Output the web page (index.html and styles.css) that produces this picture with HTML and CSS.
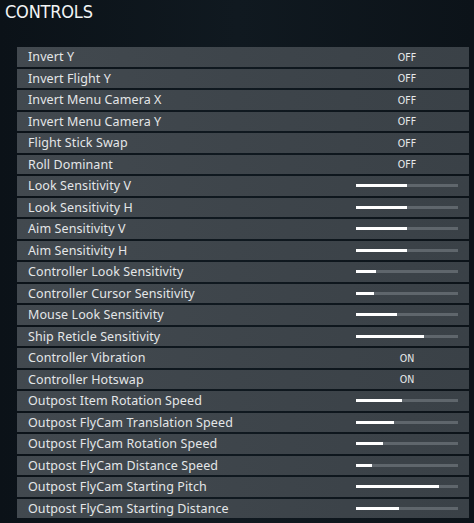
FILE: index.html
```html
<!DOCTYPE html>
<html>
<head>
<meta charset="utf-8">
<link rel="stylesheet" href="styles.css">
</head>
<body>
<div class="page">
  <h1 class="title">CONTROLS</h1>
  <div class="list">
    <div class="row"><span class="label">Invert Y</span><span class="value"><span class="toggle">OFF</span></span></div>
    <div class="row"><span class="label">Invert Flight Y</span><span class="value"><span class="toggle">OFF</span></span></div>
    <div class="row"><span class="label">Invert Menu Camera X</span><span class="value"><span class="toggle">OFF</span></span></div>
    <div class="row"><span class="label">Invert Menu Camera Y</span><span class="value"><span class="toggle">OFF</span></span></div>
    <div class="row"><span class="label">Flight Stick Swap</span><span class="value"><span class="toggle">OFF</span></span></div>
    <div class="row"><span class="label">Roll Dominant</span><span class="value"><span class="toggle">OFF</span></span></div>
    <div class="row"><span class="label">Look Sensitivity V</span><span class="value"><span class="slider"><span class="fill" style="width:50%"></span></span></span></div>
    <div class="row"><span class="label">Look Sensitivity H</span><span class="value"><span class="slider"><span class="fill" style="width:50%"></span></span></span></div>
    <div class="row"><span class="label">Aim Sensitivity V</span><span class="value"><span class="slider"><span class="fill" style="width:50%"></span></span></span></div>
    <div class="row"><span class="label">Aim Sensitivity H</span><span class="value"><span class="slider"><span class="fill" style="width:50%"></span></span></span></div>
    <div class="row"><span class="label">Controller Look Sensitivity</span><span class="value"><span class="slider"><span class="fill" style="width:20%"></span></span></span></div>
    <div class="row"><span class="label">Controller Cursor Sensitivity</span><span class="value"><span class="slider"><span class="fill" style="width:18%"></span></span></span></div>
    <div class="row"><span class="label">Mouse Look Sensitivity</span><span class="value"><span class="slider"><span class="fill" style="width:40%"></span></span></span></div>
    <div class="row"><span class="label">Ship Reticle Sensitivity</span><span class="value"><span class="slider"><span class="fill" style="width:67%"></span></span></span></div>
    <div class="row"><span class="label">Controller Vibration</span><span class="value"><span class="toggle">ON</span></span></div>
    <div class="row"><span class="label">Controller Hotswap</span><span class="value"><span class="toggle">ON</span></span></div>
    <div class="row"><span class="label">Outpost Item Rotation Speed</span><span class="value"><span class="slider"><span class="fill" style="width:45%"></span></span></span></div>
    <div class="row"><span class="label">Outpost FlyCam Translation Speed</span><span class="value"><span class="slider"><span class="fill" style="width:37%"></span></span></span></div>
    <div class="row"><span class="label">Outpost FlyCam Rotation Speed</span><span class="value"><span class="slider"><span class="fill" style="width:26%"></span></span></span></div>
    <div class="row"><span class="label">Outpost FlyCam Distance Speed</span><span class="value"><span class="slider"><span class="fill" style="width:16%"></span></span></span></div>
    <div class="row"><span class="label">Outpost FlyCam Starting Pitch</span><span class="value"><span class="slider"><span class="fill" style="width:81%"></span></span></span></div>
    <div class="row"><span class="label">Outpost FlyCam Starting Distance</span><span class="value"><span class="slider"><span class="fill" style="width:42%"></span></span></span></div>
  </div>
</div>
</body>
</html>
```
FILE: styles.css
```css
html, body {
  margin: 0;
  padding: 0;
  background: #0d141a;
}
.page {
  width: 474px;
  height: 523px;
  box-sizing: border-box;
  padding: 0 5px 0 17px;
  background: linear-gradient(90deg, #0b1218 0%, #101920 50%, #0c1319 100%);
  font-family: "Noto Sans", "DejaVu Sans", sans-serif;
  color: #e6e8ea;
  overflow: hidden;
}
.title {
  margin: 0 0 0 -12px;
  padding-top: 1px;
  height: 47px;
  box-sizing: border-box;
  font-family: "DejaVu Sans Condensed", "DejaVu Sans", sans-serif;
  font-weight: normal;
  font-size: 18px;
  line-height: 22px;
  letter-spacing: -0.2px;
  color: #f2f4f5;
}
.list {
  display: flex;
  flex-direction: column;
  gap: 2px;
}
.row {
  height: 19.5px;
  display: flex;
  align-items: center;
  background: linear-gradient(90deg, #42494f 0%, #3d444a 60%, #3a4147 100%);
  padding-left: 11px;
}
.label {
  flex: 1;
  font-size: 12.5px;
  line-height: 19.5px;
  letter-spacing: 0.1px;
  white-space: nowrap;
  color: #e4e6e8;
}
.value {
  width: 102px;
  margin-right: 11px;
  display: flex;
  justify-content: center;
  align-items: center;
}
.toggle {
  font-family: "DejaVu Sans Condensed", "DejaVu Sans", sans-serif;
  font-size: 10.5px;
  color: #e8eaeb;
}
.slider {
  width: 102px;
  height: 3px;
  background: #5f666c;
  display: flex;
}
.fill {
  height: 3px;
  background: #ffffff;
}
```
